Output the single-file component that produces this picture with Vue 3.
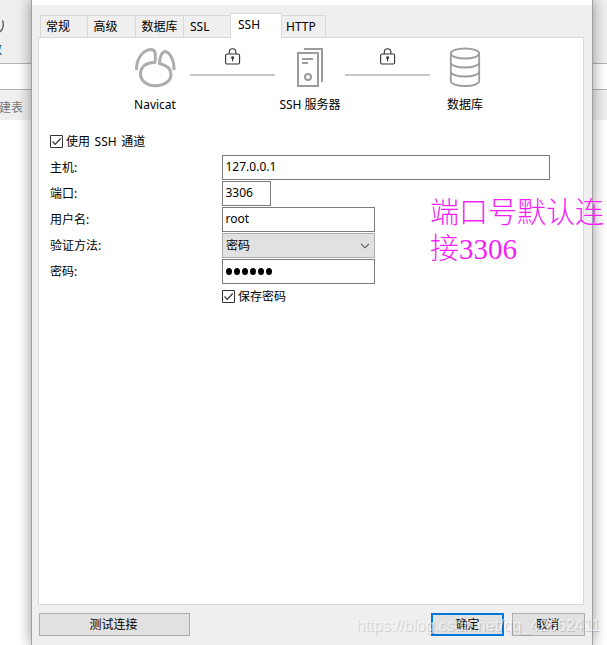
<script setup>
const tabs = [
  { name: '常规', cls: 'general' },
  { name: '高级', cls: 'advanced' },
  { name: '数据库', cls: 'database' },
  { name: 'SSL', cls: 'ssl' },
  { name: 'SSH', cls: 'active' },
  { name: 'HTTP', cls: 'http' },
]
</script>

<template>
  <div class="screen">
    <div class="backdrop">
      <div class="toolbar"><svg class="glyph" width="5" height="13" viewBox="0 0 5 13" fill="none" stroke="#555" stroke-width="1.3"><path d="M2.500.5C4 4 3.500 9 0 12" /></svg><span class="cut">数</span></div>
      <div class="strip"></div>
      <div class="subbar">建表</div>
    </div>
    <div class="dialog">
      <div class="titlebar"></div>
      <div class="tabs">
        <div v-for="t in tabs" :key="t.name" class="tab" :class="t.cls">{{ t.name }}</div>
      </div>
      <div class="panel">
        <div class="diagram">
          <div class="node">
            <svg width="42" height="42" viewBox="0 0 42 42" fill="none" stroke="#adadad" stroke-width="3" stroke-linejoin="round">
              <path d="M2.600 23C2.200 13 8 3.200 16.500 2.500C22.500 2 21.500 9 21 15.500C12.500 15 6.500 20 6.500 27C6.500 34 13 38.800 21.500 38.800C30 38.800 37 34 37 27.500C37 22 33.500 18.500 25.500 16.500C25.500 12 27 5 31 4.500C36 5 41 15 39.800 23" />
            </svg>
            <span>Navicat</span>
          </div>
          <div class="link">
            <svg width="16" height="17" viewBox="0 0 16 17" fill="none" stroke="#333" stroke-width="1.1">
              <rect x=".6" y="6" width="14" height="10" rx="1.500" />
              <path d="M4.300 6V4a3.300 3.300 0 0 1 6.600 0V6M7.600 10v3.300" />
              <circle cx="7.600" cy="9.800" r=".9" fill="#333" />
            </svg>
            <i></i>
          </div>
          <div class="node server">
            <svg width="42" height="42" viewBox="0 0 42 42" fill="none" stroke="#9c9c9c" stroke-width="2">
              <path d="M9 6h20v33H9zM15 2h18v33M13 12h11M13 16h6" />
              <circle cx="19" cy="30" r="3" />
            </svg>
            <span>SSH 服务器</span>
          </div>
          <div class="link">
            <svg width="16" height="17" viewBox="0 0 16 17" fill="none" stroke="#333" stroke-width="1.1">
              <rect x=".6" y="6" width="14" height="10" rx="1.500" />
              <path d="M4.300 6V4a3.300 3.300 0 0 1 6.600 0V6M7.600 10v3.300" />
              <circle cx="7.600" cy="9.800" r=".9" fill="#333" />
            </svg>
            <i></i>
          </div>
          <div class="node">
            <svg width="42" height="42" viewBox="0 0 42 42" fill="none" stroke="#9c9c9c" stroke-width="1.800">
              <ellipse cx="21" cy="6.500" rx="14.200" ry="5" />
              <path d="M6.800 6.500v27.500c0 2.800 6.300 5 14.200 5s14.200-2.200 14.200-5V6.500M6.800 15.500c0 2.800 6.300 5 14.200 5s14.200-2.200 14.200-5M6.800 24.500c0 2.800 6.300 5 14.200 5s14.200-2.200 14.200-5" />
            </svg>
            <span>数据库</span>
          </div>
        </div>
        <div class="check tunnel">
          <svg width="13" height="13" viewBox="0 0 13 13" fill="none" stroke="#333"><path d="M.5.5h12v12H.5z" /><path d="M2.500 6.500l2.700 2.800L10.700 3.500" stroke-width="1.200" /></svg>
          <span>使用 SSH 通道</span>
        </div>
        <div class="form">
          <label>主机:</label><div class="field host">127.0.0.1</div>
          <label>端口:</label><div class="field port">3306</div>
          <label>用户名:</label><div class="field">root</div>
          <label>验证方法:</label>
          <div class="field select">密码
            <svg width="10" height="6" viewBox="0 0 10 6" fill="none" stroke="#555" stroke-width="1.100"><path d="M1 .8L5 4.800L9 .8" /></svg>
          </div>
          <label>密码:</label><div class="field dots"><b v-for="n in 6" :key="n"></b></div>
        </div>
        <div class="check save">
          <svg width="13" height="13" viewBox="0 0 13 13" fill="none" stroke="#333"><path d="M.5.5h12v12H.5z" /><path d="M2.500 6.500l2.700 2.800L10.700 3.500" stroke-width="1.200" /></svg>
          <span>保存密码</span>
        </div>
      </div>
      <div class="footer">
        <div class="btn test">测试连接</div>
        <div class="btn ok">确定</div>
        <div class="btn cancel">取消</div>
      </div>
    </div>
    <div class="note">端口号默认连<br />接3306</div>
    <div class="watermark">https://blog.csdn.net/qq_42662411</div>
  </div>
</template>

<style>
body { margin: 0; background: #fff; }
</style>

<style scoped>
* { box-sizing: border-box; }
.screen { position: relative; width: 607px; height: 645px; overflow: hidden; padding-left: 31px; font: 12px/16px "Noto Sans", "Noto Sans CJK SC", sans-serif; color: #000; }
.backdrop { position: absolute; inset: 0; }
.toolbar { height: 63px; background: #efefef; position: relative; }
.glyph { position: absolute; left: 0; top: 20px; }
.cut { position: absolute; left: -10px; top: 42px; color: #001a33; }
.strip { height: 27px; border-top: 1px solid #b4b4b4; border-bottom: 1px solid #b4b4b4; background: #fff; }
.subbar { height: 30px; background: #efefef; color: #777; line-height: 35px; text-indent: -1px; }
.dialog { position: relative; width: 562px; height: 645px; border: solid #a0a0a0; border-width: 0 1px; background: #efefef; box-shadow: 0 0 13px rgba(0, 0, 0, .42); display: flex; flex-direction: column; }
.titlebar { height: 5px; background: #fff; }
.tabs { height: 33px; padding-left: 8px; display: flex; align-items: flex-end; margin-bottom: -1px; position: relative; }
.tab { height: 23px; border: 1px solid #d9d9d9; border-right: 0; padding-left: 5px; line-height: 22px; white-space: nowrap; }
.general, .advanced, .database { width: 48px; }
.advanced, .database { padding-left: 5.500px; }
.general { width: 47px; }
.ssl { width: 47px; padding-left: 6px; }
.active { width: 52px; height: 25px; border-right: 1px solid #d9d9d9; border-bottom: 0; background: #fff; padding-left: 7px; }
.http { width: 44px; border-left: 0; border-right: 1px solid #d9d9d9; padding-left: 4px; }
.panel { width: 546px; height: 568px; margin-left: 6px; border: 1px solid #d9d9d9; background: #fff; }
.diagram { display: flex; padding: 9px 0 0 81px; height: 97px; }
.node { width: 70px; display: flex; flex-direction: column; align-items: center; }
.node svg { margin-bottom: 8px; }
.node span { white-space: nowrap; }
.link { width: 85px; display: flex; flex-direction: column; align-items: center; padding-top: 1px; }
.link i { width: 85px; height: 2px; background: #c8c8c8; margin-top: 9px; }
.check { display: flex; align-items: center; gap: 3px; margin-left: 11px; height: 13px; }
.tunnel { word-spacing: 1.500px; }
.form { display: grid; grid-template-columns: 172px auto; justify-content: start; grid-auto-rows: 26px; margin: 7px 0 0 11px; }
.form label { line-height: 26px; }
.field { width: 153px; height: 25px; border: 1px solid #7a7a7a; padding-left: 2.500px; line-height: 22px; }
.host { width: 328px; }
.port { width: 49px; }
.select { background: #e1e1e1; border-color: #adadad; padding-left: 3px; display: flex; align-items: center; justify-content: space-between; padding-right: 4px; line-height: 24px; }
.dots { display: flex; align-items: center; gap: 2px; padding-left: 3px; }
.dots b { width: 6px; height: 7px; border-radius: 50%; background: #000; }
.save { margin: 5px 0 0 183px; }
.footer { display: flex; margin: 8px 0 0 7px; }
.btn { height: 23px; border: 1px solid #adadad; background: #e1e1e1; text-align: center; line-height: 22px; }
.test { width: 151px; margin-right: 241px; padding-right: 2px; }
.ok { width: 73px; border: 2px solid #0078d7; line-height: 20px; margin-right: 8px; }
.cancel { width: 73px; padding-right: 2px; }
.note { position: absolute; left: 430px; top: 195px; font: 300 29px/36px "Liberation Serif", "Noto Sans CJK SC", serif; color: #f51ff5; white-space: nowrap; }
.watermark { position: absolute; left: 356px; top: 616px; font: 16px/20px "Liberation Sans", sans-serif; color: rgba(255, 255, 255, .65); text-shadow: 1px 1px 1px rgba(0, 0, 0, .16); white-space: nowrap; }
</style>
